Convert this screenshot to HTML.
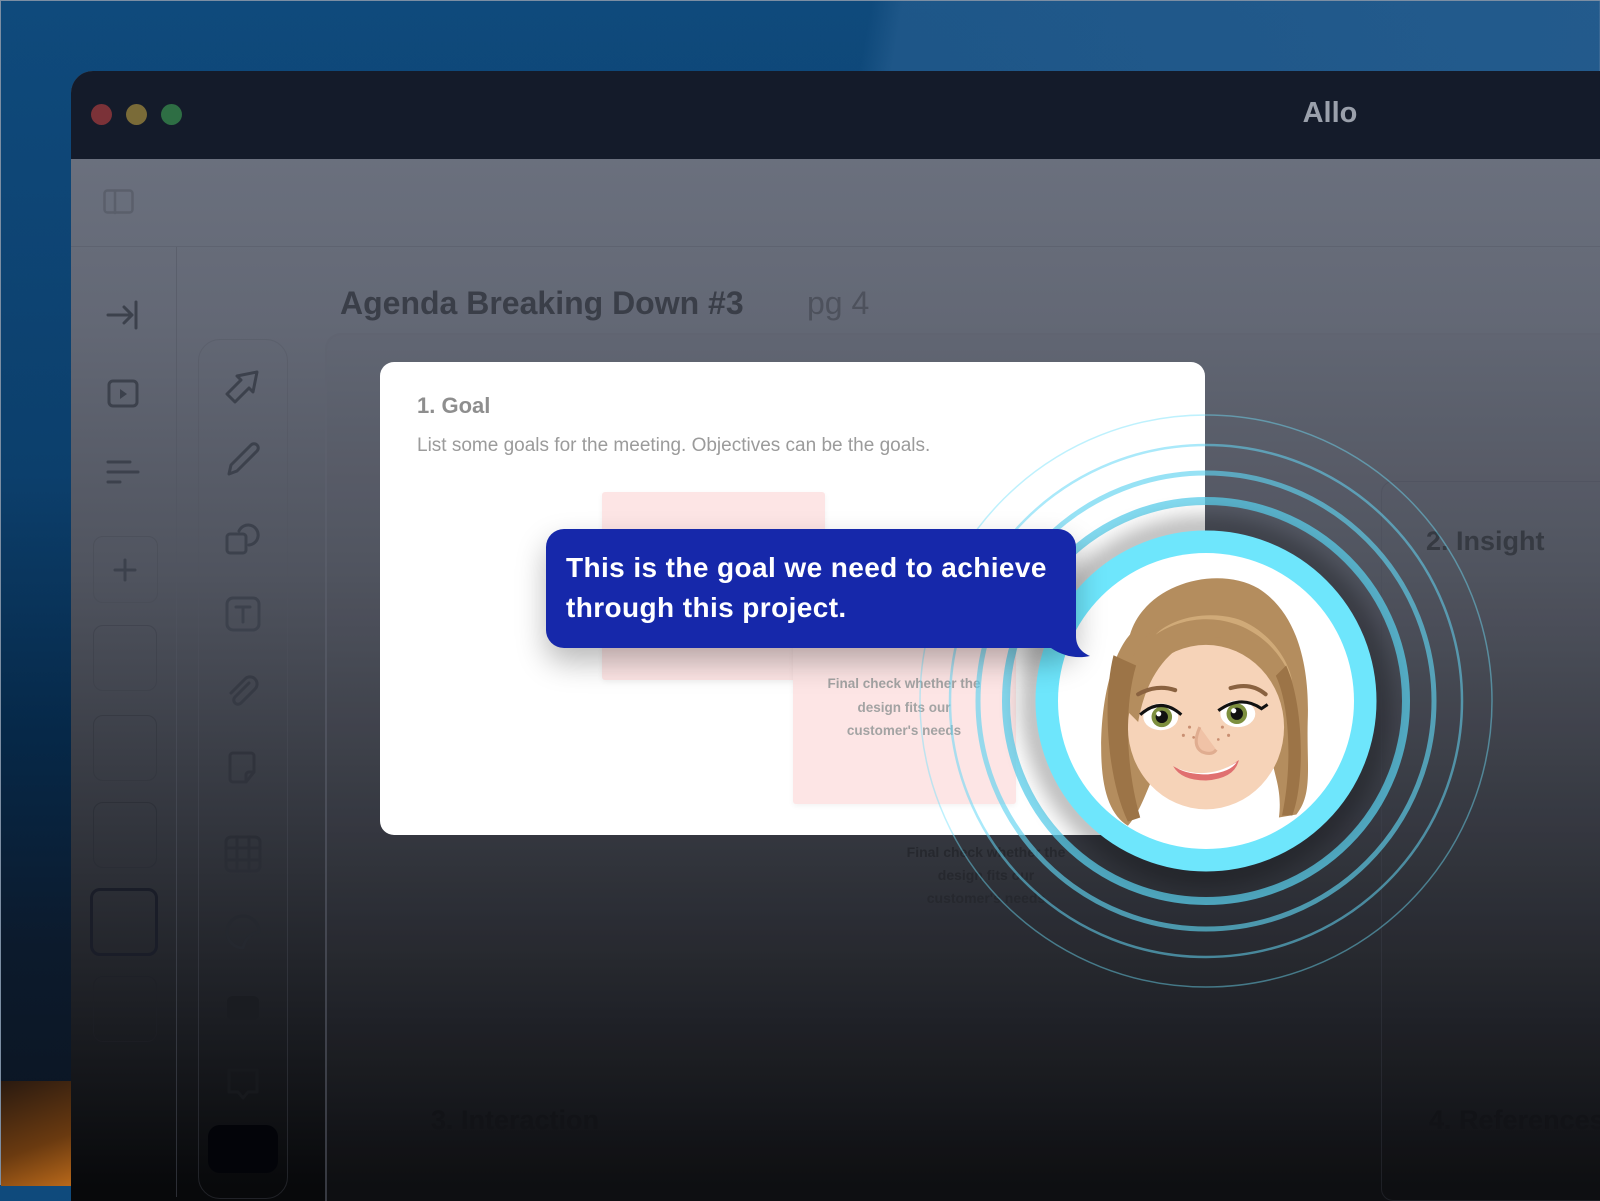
<!DOCTYPE html>
<html><head><meta charset="utf-8"><style>
*{margin:0;padding:0;box-sizing:border-box}
body{width:1600px;height:1185px;overflow:hidden;position:relative;font-family:"Liberation Sans",sans-serif;
background:linear-gradient(180deg,#0f4a7c 0%,#0c3f6c 40%,#062848 62%,#0c1a2c 80%,#0b1420 100%);border:1px solid #7c8ea3}
.abs{position:absolute}
.win{left:70px;top:70px;width:1540px;height:1130px;border-radius:22px 0 0 0;overflow:hidden;
background:linear-gradient(180deg,#6e7482 0px,#636875 250px,#50545f 500px,#33363e 750px,#1b1d22 950px,#08090b 1115px)}
.tb{left:0;top:0;width:100%;height:88px;background:#141b2a}
.dot{width:21px;height:21px;border-radius:50%;top:33px}
.ic{stroke:#3c414c;fill:none;stroke-width:3;stroke-linecap:round;stroke-linejoin:round}
.ghost{color:#2b2e35;font-weight:bold}
</style></head><body>
<div class="abs" style="left:0;top:1080px;width:70px;height:105px;background:linear-gradient(160deg,#2a1a10,#6a3a10 60%,#b8681a)"></div>
<div class="abs" style="left:0;top:0;width:1600px;height:70px;background:linear-gradient(100deg,rgba(0,0,0,0) 54%,rgba(40,95,145,.6) 56%,rgba(40,95,145,.8) 100%)"></div>
<div class="abs win">
  <div class="abs tb">
    <div class="abs dot" style="left:20px;background:#7b3238"></div>
    <div class="abs dot" style="left:55px;background:#7a6b38"></div>
    <div class="abs dot" style="left:90px;background:#2e6e44"></div>
    <div class="abs" style="left:1200px;top:26px;width:118px;text-align:center;color:#9aa0ab;font-size:29px;font-weight:bold">Allo</div>
  </div>
  <div class="abs" style="left:0;top:175px;width:100%;height:1px;background:#5e6370"></div>
  <svg class="abs" style="left:32px;top:118px" width="32" height="26"><rect x="1.5" y="1.5" width="28" height="22" rx="3" class="ic" style="stroke:#5a5f6b;stroke-width:2.5"/><line x1="12" y1="2" x2="12" y2="24" class="ic" style="stroke:#5a5f6b;stroke-width:2.5"/></svg>
  <div class="abs" style="left:105px;top:176px;width:1px;height:950px;background:rgba(80,84,95,.5)"></div>
  <!-- left icons -->
  <svg class="abs" style="left:35px;top:229px" width="34" height="30"><path class="ic" d="M2 15H26M18 7l8 8-8 8M30 2v26"/></svg>
  <svg class="abs" style="left:36px;top:308px" width="32" height="30"><rect x="2" y="2" width="28" height="25" rx="4" class="ic"/><path d="M13 10l7 5-7 5z" fill="#3c414c"/></svg>
  <svg class="abs" style="left:35px;top:388px" width="34" height="26"><path class="ic" d="M2 3H24M2 13H32M2 23H14"/></svg>
  <div class="abs" style="left:22px;top:465px;width:65px;height:67px;border-radius:10px;border:1.5px solid rgba(70,74,84,.5)"></div>
  <svg class="abs" style="left:42px;top:487px" width="24" height="24"><path class="ic" d="M12 2v20M2 12h20"/></svg>
  <div class="abs" style="left:22px;top:554px;width:64px;height:66px;border-radius:10px;border:1.5px solid rgba(60,64,74,.6)"></div>
  <div class="abs" style="left:22px;top:644px;width:64px;height:66px;border-radius:10px;border:1.5px solid rgba(50,54,62,.6)"></div>
  <div class="abs" style="left:22px;top:731px;width:64px;height:66px;border-radius:10px;border:1.5px solid rgba(40,44,52,.6)"></div>
  <div class="abs" style="left:19px;top:817px;width:68px;height:68px;border-radius:10px;border:3px solid #1a1d28"></div>
  <div class="abs" style="left:22px;top:905px;width:64px;height:66px;border-radius:10px;border:1.5px solid rgba(30,32,38,.6)"></div>
  <!-- tools -->
  <div class="abs" style="left:127px;top:268px;width:90px;height:860px;border-radius:22px;border:1.5px solid rgba(80,84,95,.35)"></div>
  <svg class="abs" style="left:152px;top:293px" width="40" height="40"><path class="ic" d="M4 30l14-14-4-4 20-4-4 20-4-4-14 14z"/></svg>
  <svg class="abs" style="left:154px;top:371px" width="36" height="36"><path class="ic" d="M4 32l2-9L26 3a4 4 0 016 6L12 29z"/></svg>
  <svg class="abs" style="left:154px;top:450px" width="36" height="36"><rect x="2" y="13" width="19" height="19" rx="3" class="ic"/><path class="ic" d="M14 10a10 10 0 1110 14"/></svg>
  <svg class="abs" style="left:154px;top:525px" width="36" height="36"><rect x="2" y="2" width="32" height="32" rx="6" class="ic"/><path class="ic" d="M11 11h14M18 11v15"/></svg>
  <svg class="abs" style="left:154px;top:604px" width="36" height="36"><path class="ic" d="M24 8L10 22a4 4 0 006 6L30 14a7 7 0 00-10-10L6 18" style="stroke:#363a44"/></svg>
  <svg class="abs" style="left:155px;top:679px" width="34" height="36"><path class="ic" d="M4 6a3 3 0 013-3h18a3 3 0 013 3v16L20 32H7a3 3 0 01-3-3z M20 32v-7a3 3 0 013-3h5" style="stroke:#30333c"/></svg>
  <svg class="abs" style="left:153px;top:764px" width="38" height="38"><rect x="2" y="2" width="34" height="34" rx="5" class="ic" style="stroke:#2a2d35"/><path class="ic" d="M13 2v34M25 2v34M2 13h34M2 25h34" style="stroke:#2a2d35"/></svg>
  <svg class="abs" style="left:154px;top:843px" width="36" height="36"><path class="ic" d="M18 34A16 16 0 1134 18C28 18 20 24 18 34z" style="stroke:#25282f"/></svg>
  <div class="abs" style="left:156px;top:925px;width:32px;height:24px;border-radius:6px;background:#1a1c21"></div>
  <svg class="abs" style="left:155px;top:996px" width="34" height="36"><path class="ic" d="M3 3h28v22H22l-5 6-5-6H3z" style="stroke:#17191d"/></svg>
  <div class="abs" style="left:137px;top:1054px;width:70px;height:48px;border-radius:12px;background:#030409"></div>
  <!-- title -->
  <div class="abs" style="left:269px;top:214px;font-size:32px;font-weight:bold;color:#3a3e48;white-space:nowrap">Agenda Breaking Down #3</div>
  <div class="abs" style="left:736px;top:214px;font-size:32px;color:#4d515c;white-space:nowrap">pg 4</div>
  <!-- canvas -->
  <div class="abs" style="left:254px;top:262px;width:1300px;height:900px;border-radius:16px;border:2px solid rgba(95,100,112,.5);background:rgba(90,95,106,.08)"></div>
  <div class="abs" style="left:1310px;top:410px;width:260px;height:720px;border-radius:12px;border:1px solid rgba(70,74,85,.3)"></div>
  <div class="abs ghost" style="left:1355px;top:455px;font-size:27px;color:#363a42">2. Insight</div>
  <div class="abs ghost" style="left:1358px;top:1034px;font-size:27px;color:#121317">4. References</div>
  <div class="abs ghost" style="left:360px;top:1034px;font-size:27px;color:#121317">3. Interaction</div>
  <div class="abs ghost" style="left:830px;top:770px;width:170px;text-align:center;font-size:14px;line-height:23px;color:#26282e">Final check whether the design fits our customer's needs</div>
</div>
<!-- card -->
<div class="abs" style="left:379px;top:361px;width:825px;height:473px;border-radius:14px;background:#fff;overflow:hidden">
  <div class="abs" style="left:37px;top:31px;font-size:22px;font-weight:bold;color:#8e8e8e">1. Goal</div>
  <div class="abs" style="left:37px;top:73px;font-size:19px;color:#9b9b9b;white-space:nowrap">List some goals for the meeting. Objectives can be the goals.</div>
  <div class="abs" style="left:222px;top:130px;width:223px;height:188px;background:#fde5e5;border-radius:3px;box-shadow:0 2px 6px rgba(0,0,0,.05)"></div>
  <div class="abs" style="left:413px;top:268px;width:223px;height:174px;background:#fde5e5;border-radius:3px;box-shadow:0 2px 6px rgba(0,0,0,.05)"></div>
  <div class="abs" style="left:424px;top:310px;width:200px;text-align:center;font-size:13.5px;font-weight:bold;line-height:23.5px;color:#a3a3a3">Final check whether the<br>design fits our<br>customer's needs</div>
</div>
<!-- rings -->
<svg class="abs" style="left:0;top:0" width="1600" height="1185">
  <defs><filter id="bl" x="-50%" y="-50%" width="200%" height="200%"><feGaussianBlur stdDeviation="12"/></filter></defs>
  <circle cx="1205" cy="700" r="286" fill="none" stroke="rgba(110,225,250,.45)" stroke-width="1.5"/>
  <circle cx="1205" cy="700" r="256" fill="none" stroke="rgba(100,215,245,.55)" stroke-width="2.5"/>
  <circle cx="1205" cy="700" r="228" fill="none" stroke="rgba(95,210,240,.65)" stroke-width="5"/>
  <circle cx="1205" cy="700" r="200" fill="none" stroke="rgba(90,205,235,.75)" stroke-width="8"/>
  <circle cx="1205" cy="700" r="172" fill="none" stroke="rgba(0,0,0,.45)" stroke-width="16" filter="url(#bl)"/>
  <circle cx="1205" cy="700" r="159" fill="none" stroke="#6ee6fc" stroke-width="23"/>
  <circle cx="1205" cy="700" r="148" fill="#fff"/>
</svg>
<!-- bubble -->
<div class="abs" style="left:545px;top:528px;width:530px;height:119px;border-radius:18px;background:#1628aa;box-shadow:0 14px 30px rgba(0,0,0,.28)"></div>
<svg class="abs" style="left:1040px;top:600px" width="50" height="58"><path d="M10 0h25v35c0 10 5 16 14 20C35 58 22 55 10 47z" fill="#1628aa"/></svg>
<div class="abs" style="left:565px;top:547px;font-size:28px;font-weight:bold;line-height:40px;color:#fff;white-space:nowrap;letter-spacing:0.4px">This is the goal we need to achieve<br>through this project.</div>
<!-- avatar -->
<svg class="abs" style="left:1098px;top:572px" width="216" height="262" viewBox="0 0 210 255">
  <path d="M30 60C45 10 115 -8 155 15C195 40 205 95 203 145C202 190 208 215 192 235L175 238C178 215 172 200 170 190L52 200C45 215 40 232 28 246C10 235 2 210 2 170C2 120 14 78 30 60z" fill="#b48d5e"/>
  <ellipse cx="104" cy="150" rx="76" ry="80" fill="#f6d3b8"/>
  <path d="M28 135C22 90 38 55 72 48C112 40 152 48 172 72C150 62 112 62 95 64C70 72 46 98 38 145z" fill="#b48d5e"/>
  <path d="M55 60C100 30 165 45 188 105C182 75 155 50 132 44C100 36 68 46 55 60z" fill="#d0aa78"/>
  <path d="M14 80C4 120 6 195 28 242L40 238C26 190 24 130 36 90z" fill="#9c7447"/>
  <path d="M182 90C200 130 200 205 188 236L178 236C188 190 186 130 172 100z" fill="#9c7447"/>
  <path d="M38 118q18-10 36-4" stroke="#8a6240" stroke-width="4" fill="none" stroke-linecap="round"/>
  <path d="M128 112q20-6 34 6" stroke="#8a6240" stroke-width="4" fill="none" stroke-linecap="round"/>
  <ellipse cx="60" cy="140" rx="17" ry="13" fill="#fff"/>
  <ellipse cx="135" cy="137" rx="17" ry="13" fill="#fff"/>
  <circle cx="61" cy="140" r="10" fill="#7d8f3e"/><circle cx="61" cy="140" r="6" fill="#111"/><circle cx="58" cy="137" r="2.5" fill="#fff"/>
  <circle cx="134" cy="137" r="10" fill="#7d8f3e"/><circle cx="134" cy="137" r="6" fill="#111"/><circle cx="131" cy="134" r="2.5" fill="#fff"/>
  <path d="M40 138q20-18 40 0M116 134q22-16 42-2l6-4" stroke="#111" stroke-width="3" fill="none"/>
  <path d="M98 150q-8 18 2 24q10 4 14-2" stroke="#e0ad90" stroke-width="3" fill="#f0c2a6"/>
  <path d="M72 188q32 18 64-6q-4 18-32 20q-24 0-32-14z" fill="#e07070"/>
  <path d="M76 190q30 12 58-6q-6 10-28 12q-20 0-30-6z" fill="#fff"/>
  <g fill="#c98f72"><circle cx="88" cy="150" r="1.5"/><circle cx="82" cy="158" r="1.5"/><circle cx="120" cy="150" r="1.5"/><circle cx="126" cy="158" r="1.5"/><circle cx="92" cy="160" r="1.3"/><circle cx="116" cy="162" r="1.3"/></g>
</svg>
</body></html>
